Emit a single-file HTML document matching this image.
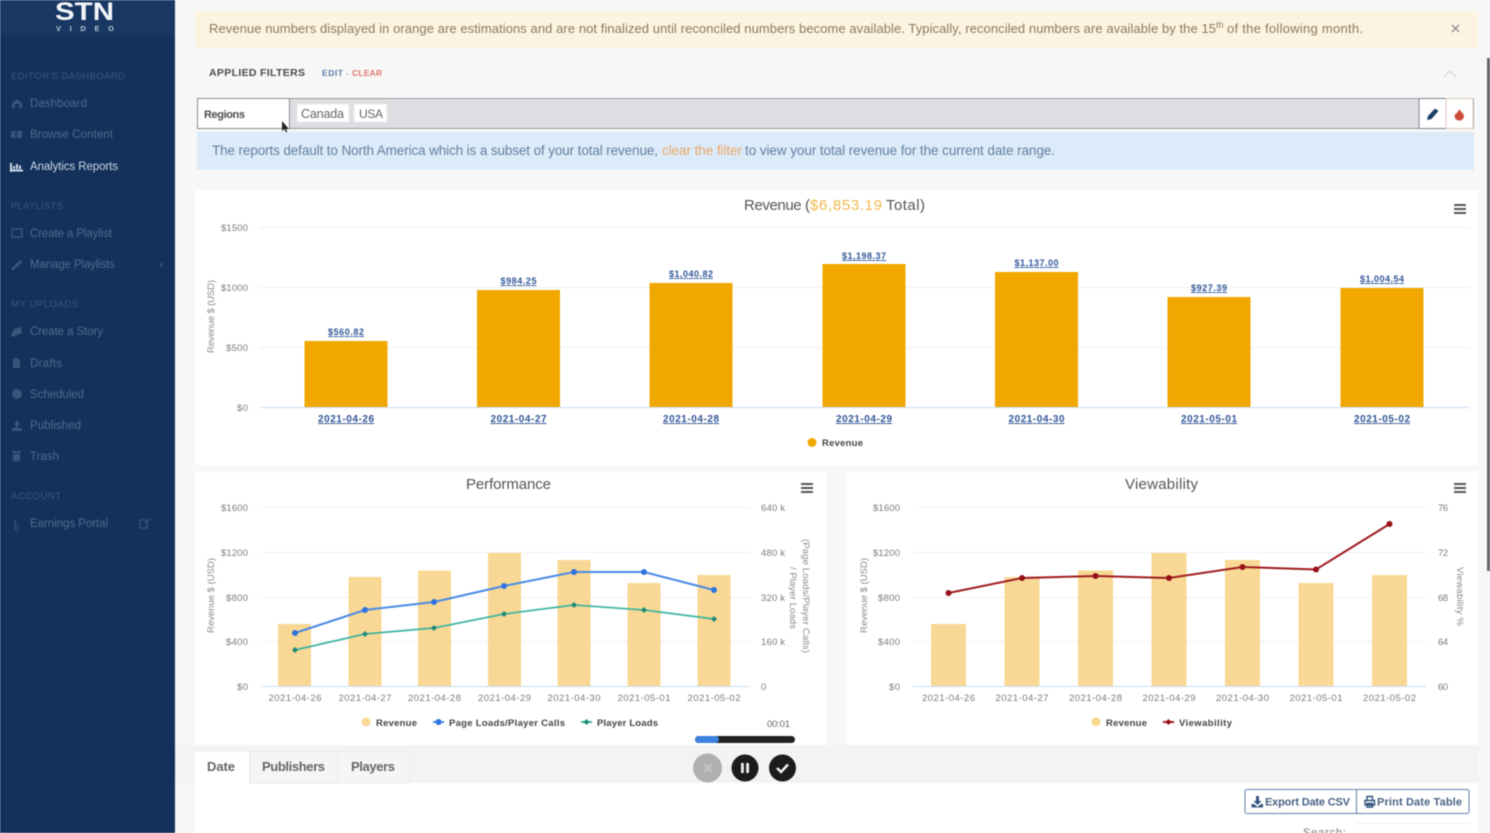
<!DOCTYPE html>
<html lang="en"><head><meta charset="utf-8"><title>Analytics Reports</title>
<style>
html,body{margin:0;padding:0;width:1490px;height:833px;overflow:hidden;background:#f7f7f7}
svg{display:block;filter:blur(.55px)}
text{font-family:"Liberation Sans",Arial,sans-serif}
.side{font-size:11.5px;fill:#4f6a8a}
.head{font-size:9.5px;fill:#3a577c}
.ax{font-size:9.5px;fill:#7b7b7b}
.axb{font-size:9.5px;fill:#888}
.blue{font-size:10px;font-weight:bold;fill:#2f5597;text-decoration:underline}
.val{font-size:9px}
.leg{font-size:9.5px;font-weight:bold;fill:#444}
.title{font-size:15px;fill:#555}
.alert{font-size:13px;fill:#8b7b5c}
.info{font-size:13.5px;fill:#62809f}
.tab{font-size:13px;font-weight:bold;fill:#666}
.btn{font-size:11px;font-weight:bold;fill:#4a6285}
.grid{stroke:#efefef;stroke-width:1}
.base{stroke:#c9def5;stroke-width:1}
</style></head><body>
<svg width="1490" height="833" viewBox="0 0 1490 833" xmlns="http://www.w3.org/2000/svg">
<rect width="1490" height="833" fill="#f7f7f7"/>

<!-- sidebar -->
<rect width="175" height="833" fill="#14315c"/>
<rect width="175" height="36" fill="#183763"/>
<text x="55" y="20" font-size="25" font-weight="bold" fill="#f2f5f8" textLength="59" lengthAdjust="spacingAndGlyphs">STN</text>
<text x="56" y="31" font-size="7.5" font-weight="bold" fill="#b9c6d6" textLength="58">VIDEO</text>
<text class="head" x="11" y="79" textLength="114">EDITOR'S DASHBOARD</text>
<text class="head" x="11" y="209" textLength="52">PLAYLISTS</text>
<text class="head" x="11" y="307" textLength="67">MY UPLOADS</text>
<text class="head" x="11" y="499" textLength="50">ACCOUNT</text>

<text class="side" x="30" y="107" textLength="57">Dashboard</text>
<text class="side" x="30" y="138" textLength="83">Browse Content</text>
<text class="side" x="30" y="170" textLength="88" style="fill:#cbd6e5">Analytics Reports</text>
<text class="side" x="30" y="237" textLength="82">Create a Playlist</text>
<text class="side" x="30" y="268" textLength="85">Manage Playlists</text>
<text class="side" x="30" y="335" textLength="73">Create a Story</text>
<text class="side" x="30" y="367" textLength="32">Drafts</text>
<text class="side" x="30" y="398" textLength="54">Scheduled</text>
<text class="side" x="30" y="429" textLength="51">Published</text>
<text class="side" x="30" y="460" textLength="29">Trash</text>
<text class="side" x="30" y="527" textLength="78">Earnings Portal</text>

<!-- sidebar icons -->
<g fill="#38557a">
<path d="M12 103 L17 99 L22 103 V108 H19 V104 H15 V108 H12Z"/>
<rect x="11" y="131" width="4.5" height="7"/><rect x="17" y="131" width="5" height="7"/>
<rect x="12" y="229" width="10" height="8" fill="none" stroke="#38557a" stroke-width="1.5"/>
<path d="M12 268 L20 260 L22 262 L14 270 L11 270Z"/>
<path d="M11 335 L14 329 L21 327 L22 333 L15 336 L13 337Z"/>
<path d="M13 358 H18 L20 361 V368 H13Z"/>
<circle cx="17" cy="394" r="5"/>
<path d="M17 420 L20 425 H18 V428 H22 V431 H12 V428 H16 V425 H14Z"/>
<path d="M13 454 H20 V461 H13Z"/><rect x="12" y="451" width="9" height="2"/>
<path d="M15 519 V530 H18 V526 L15 523Z" fill="none" stroke="#38557a"/>
<path d="M140 520 H147 V528 H140Z" fill="none" stroke="#38557a" stroke-width="1.2"/>
<path d="M145 523 L151 518" stroke="#38557a" stroke-width="1.2" fill="none"/>
</g>
<path d="M11 172 V163 M11 170.500 H23 M14 169 V166 M17 169 V164 M20 169 V165.500" stroke="#ced8e6" stroke-width="2" fill="none"/>
<path d="M163 263 L160 265 L163 267" stroke="#3c5a7f" fill="none"/>

<!-- alert -->
<rect x="195" y="11" width="1283" height="37" fill="#fcf3e1"/>
<text class="alert" x="209" y="33" textLength="1007">Revenue numbers displayed in orange are estimations and are not finalized until reconciled numbers become available. Typically, reconciled numbers are available by the 15</text>
<text x="1216" y="28" font-size="9" fill="#8b7b5c">th</text>
<text class="alert" x="1227" y="33" textLength="136">of the following month.</text>
<path d="M1452 25 L1459 32 M1459 25 L1452 32" stroke="#8e8e8e" stroke-width="1.3"/>

<!-- applied filters -->
<text x="209" y="76" font-size="10.5" font-weight="bold" fill="#4a4a4a" textLength="96">APPLIED FILTERS</text>
<text x="322" y="76" font-size="8.5" font-weight="bold" fill="#5a78ab" textLength="21">EDIT</text>
<text x="346" y="76" font-size="8.500" font-weight="bold" fill="#c9a09a">-</text>
<text x="352" y="76" font-size="8.500" font-weight="bold" fill="#e0776d" textLength="30">CLEAR</text>
<path d="M1444 77 L1450 71 L1456 77" stroke="#d8d8d8" stroke-width="1.3" fill="none"/>

<!-- filter bar -->
<rect x="197.500" y="98.500" width="1276" height="30" fill="#dddee1" stroke="#9a9a9e"/>
<rect x="197.500" y="98.500" width="92" height="30" fill="#fff" stroke="#8d8d8d"/>
<text x="204" y="118" font-size="11" font-weight="bold" fill="#4c4c4c" textLength="41">Regions</text>
<rect x="297" y="104" width="52" height="18" fill="#fff" stroke="#e8e8e8"/>
<rect x="354" y="104" width="33" height="18" fill="#fff" stroke="#e8e8e8"/>
<text x="301" y="118" font-size="12.5" fill="#666" textLength="43">Canada</text>
<text x="359" y="118" font-size="12" fill="#666" textLength="24">USA</text>
<rect x="1419" y="98.500" width="27" height="30" fill="#fff" stroke="#7d8592"/>
<rect x="1446" y="98.500" width="27" height="30" fill="#fff" stroke="#d8c7b7"/>
<path d="M1427 120 L1428 116 L1435 108.500 L1438.500 111 L1431.500 119Z" fill="#1d3c67"/>
<path d="M1459 109 C1460 111 1464 113 1464 116.500 A4.800 4.800 0 0 1 1454.500 116.500 C1454.500 114.500 1456 113.500 1457 113 C1457.500 112 1458.500 111 1459 109Z" fill="#cf4c3c"/>
<path d="M282 121 V131 L284.500 129 L286 133 L287.500 132.500 L286 129 L289 129Z" fill="#222"/>

<!-- info -->
<rect x="197" y="132" width="1277" height="38" fill="#dcebf9"/>
<text class="info" x="212" y="155" textLength="446">The reports default to North America which is a subset of your total revenue,</text>
<text class="info" x="662" y="155" textLength="80" style="fill:#e9a768">clear the filter</text>
<text class="info" x="745" y="155" textLength="310">to view your total revenue for the current date range.</text>

<!-- chart panels -->
<rect x="195" y="190" width="1283" height="275" fill="#fff"/>
<rect x="195" y="472" width="632" height="273" fill="#fff"/>
<rect x="847" y="472" width="631" height="273" fill="#fff"/>
<rect x="1487" y="58" width="3" height="513" fill="#666"/>

<!-- revenue chart -->
<text class="title" x="744" y="210" textLength="66">Revenue (</text>
<text class="title" x="810" y="210" textLength="72" style="fill:#f0b84c">$6,853.19</text>
<text class="title" x="886" y="210" textLength="39">Total)</text>
<g fill="#555"><rect x="1454" y="204" width="12" height="2"/><rect x="1454" y="208" width="12" height="2"/><rect x="1454" y="212" width="12" height="2"/></g>
<path class="grid" d="M260 227.500 H1470 M260 287.500 H1470 M260 347.500 H1470"/>
<path class="base" d="M260 407.500 H1470"/>
<text class="ax" x="248" y="231" text-anchor="end" textLength="27">$1500</text>
<text class="ax" x="248" y="291" text-anchor="end" textLength="27">$1000</text>
<text class="ax" x="248" y="351" text-anchor="end" textLength="22">$500</text>
<text class="ax" x="248" y="411" text-anchor="end" textLength="11">$0</text>
<text class="axb" transform="translate(214,353) rotate(-90)" textLength="73">Revenue $ (USD)</text>
<g fill="#f0a800">
<rect x="304.500" y="341" width="83" height="66"/>
<rect x="477" y="290" width="83" height="117"/>
<rect x="649.500" y="283" width="83" height="124"/>
<rect x="822.500" y="264" width="83" height="143"/>
<rect x="995" y="272" width="83" height="135"/>
<rect x="1167.500" y="297" width="83" height="110"/>
<rect x="1340.500" y="288" width="83" height="119"/>
</g>
<g text-anchor="middle">
<text class="blue val" x="346" y="335" textLength="36">$560.82</text>
<text class="blue val" x="518.500" y="284" textLength="36">$984.25</text>
<text class="blue val" x="691" y="277" textLength="44">$1,040.82</text>
<text class="blue val" x="864" y="259" textLength="44">$1,198.37</text>
<text class="blue val" x="1036.500" y="266" textLength="44">$1,137.00</text>
<text class="blue val" x="1209" y="291" textLength="36">$927.39</text>
<text class="blue val" x="1382" y="282" textLength="44">$1,004.54</text>
<text class="blue" x="346" y="422" textLength="56">2021-04-26</text>
<text class="blue" x="518.500" y="422" textLength="56">2021-04-27</text>
<text class="blue" x="691" y="422" textLength="56">2021-04-28</text>
<text class="blue" x="864" y="422" textLength="56">2021-04-29</text>
<text class="blue" x="1036.500" y="422" textLength="56">2021-04-30</text>
<text class="blue" x="1209" y="422" textLength="56">2021-05-01</text>
<text class="blue" x="1382" y="422" textLength="56">2021-05-02</text>
</g>
<circle cx="812" cy="442.500" r="4.500" fill="#f0a800"/>
<text class="leg" x="822" y="446" textLength="41">Revenue</text>

<!-- performance chart -->
<text class="title" x="466" y="489" textLength="85">Performance</text>
<g fill="#555"><rect x="801" y="483" width="12" height="2"/><rect x="801" y="487" width="12" height="2"/><rect x="801" y="491" width="12" height="2"/></g>
<path class="grid" d="M262 507.500 H750 M262 552.500 H750 M262 597.500 H750 M262 641.500 H750"/>
<path class="base" d="M261 686.500 H749"/>
<g class="ax" text-anchor="end">
<text x="248" y="511" textLength="27">$1600</text>
<text x="248" y="556" textLength="27">$1200</text>
<text x="248" y="601" textLength="22">$800</text>
<text x="248" y="645" textLength="22">$400</text>
<text x="248" y="690" textLength="11">$0</text>
</g>
<g class="ax">
<text x="761" y="511" textLength="24">640 k</text>
<text x="761" y="556" textLength="24">480 k</text>
<text x="761" y="601" textLength="24">320 k</text>
<text x="761" y="645" textLength="24">160 k</text>
<text x="761" y="690">0</text>
</g>
<text class="axb" transform="translate(214,633) rotate(-90)" textLength="75">Revenue $ (USD)</text>
<text class="axb" transform="translate(803,539) rotate(90)" textLength="114">(Page Loads/Player Calls)</text>
<text class="axb" transform="translate(790,567) rotate(90)" textLength="62">/ Player Loads</text>
<g fill="#f8d894">
<rect x="278" y="624" width="33" height="62"/>
<rect x="348.500" y="577" width="33" height="109"/>
<rect x="418" y="570.500" width="33" height="115.500"/>
<rect x="488" y="553" width="33" height="133"/>
<rect x="557.500" y="560" width="33" height="126"/>
<rect x="627.500" y="583" width="33" height="103"/>
<rect x="697.500" y="575" width="33" height="111"/>
</g>
<polyline points="295,633 365,610 434,602 504,586 574,572 644,572 714,590" fill="none" stroke="#4a8ae6" stroke-width="2"/>
<g fill="#2f73dd"><circle cx="295" cy="633" r="3"/><circle cx="365" cy="610" r="3"/><circle cx="434" cy="602" r="3"/><circle cx="504" cy="586" r="3"/><circle cx="574" cy="572" r="3"/><circle cx="644" cy="572" r="3"/><circle cx="714" cy="590" r="3"/></g>
<polyline points="295,650 365,634 434,628 504,614 574,605 644,610 714,619" fill="none" stroke="#3fb3a3" stroke-width="1.700"/>
<g fill="#1d8a76"><path d="M295 647 L298 650 L295 653 L292 650Z"/><path d="M365 631 L368 634 L365 637 L362 634Z"/><path d="M434 625 L437 628 L434 631 L431 628Z"/><path d="M504 611 L507 614 L504 617 L501 614Z"/><path d="M574 602 L577 605 L574 608 L571 605Z"/><path d="M644 607 L647 610 L644 613 L641 610Z"/><path d="M714 616 L717 619 L714 622 L711 619Z"/></g>
<g class="ax" text-anchor="middle">
<text x="295" y="701" textLength="53">2021-04-26</text>
<text x="365" y="701" textLength="53">2021-04-27</text>
<text x="434.500" y="701" textLength="53">2021-04-28</text>
<text x="504.500" y="701" textLength="53">2021-04-29</text>
<text x="574" y="701" textLength="53">2021-04-30</text>
<text x="644" y="701" textLength="53">2021-05-01</text>
<text x="714" y="701" textLength="53">2021-05-02</text>
</g>
<circle cx="366" cy="722" r="4.500" fill="#f8d894"/>
<text class="leg" x="376" y="726" textLength="41">Revenue</text>
<path d="M433 722 H444" stroke="#4a8ae6" stroke-width="2"/><circle cx="438.500" cy="722" r="3" fill="#2f73dd"/>
<text class="leg" x="449" y="726" textLength="116">Page Loads/Player Calls</text>
<path d="M581 722 H592" stroke="#3fb3a3" stroke-width="2"/><path d="M586.500 719 L589.500 722 L586.500 725 L583.500 722Z" fill="#1d8a76"/>
<text class="leg" x="597" y="726" textLength="61">Player Loads</text>

<!-- viewability chart -->
<text class="title" x="1125" y="489" textLength="73">Viewability</text>
<g fill="#555"><rect x="1454" y="483" width="12" height="2"/><rect x="1454" y="487" width="12" height="2"/><rect x="1454" y="491" width="12" height="2"/></g>
<path class="grid" d="M917 507.500 H1425 M914 552.500 H1425 M914 597.500 H1425 M914 641.500 H1425"/>
<path class="base" d="M913 686.500 H1426"/>
<g class="ax" text-anchor="end">
<text x="900" y="511" textLength="27">$1600</text>
<text x="900" y="556" textLength="27">$1200</text>
<text x="900" y="601" textLength="22">$800</text>
<text x="900" y="645" textLength="22">$400</text>
<text x="900" y="690" textLength="11">$0</text>
</g>
<g class="ax">
<text x="1438" y="511" textLength="10">76</text>
<text x="1438" y="556" textLength="10">72</text>
<text x="1438" y="601" textLength="10">68</text>
<text x="1438" y="645" textLength="10">64</text>
<text x="1438" y="690" textLength="10">60</text>
</g>
<text class="axb" transform="translate(867,633) rotate(-90)" textLength="75">Revenue $ (USD)</text>
<text class="axb" transform="translate(1457,567) rotate(90)" textLength="59">Viewability %</text>
<g fill="#f8d894">
<rect x="931" y="624" width="35" height="62"/>
<rect x="1004.500" y="577" width="35" height="109"/>
<rect x="1078" y="570.500" width="35" height="115.500"/>
<rect x="1151.500" y="553" width="35" height="133"/>
<rect x="1225" y="560" width="35" height="126"/>
<rect x="1298.500" y="583" width="35" height="103"/>
<rect x="1372" y="575" width="35" height="111"/>
</g>
<polyline points="948.500,593 1022,578 1095.500,576 1169,578 1242.500,567 1316,569.500 1389.500,524" fill="none" stroke="#a01c20" stroke-width="2"/>
<g fill="#97101a"><circle cx="948.500" cy="593" r="3"/><circle cx="1022" cy="578" r="3"/><circle cx="1095.500" cy="576" r="3"/><circle cx="1169" cy="578" r="3"/><circle cx="1242.500" cy="567" r="3"/><circle cx="1316" cy="569.500" r="3"/><circle cx="1389.500" cy="524" r="3"/></g>
<g class="ax" text-anchor="middle">
<text x="948.500" y="701" textLength="53">2021-04-26</text>
<text x="1022" y="701" textLength="53">2021-04-27</text>
<text x="1095.500" y="701" textLength="53">2021-04-28</text>
<text x="1169" y="701" textLength="53">2021-04-29</text>
<text x="1242.500" y="701" textLength="53">2021-04-30</text>
<text x="1316" y="701" textLength="53">2021-05-01</text>
<text x="1389.500" y="701" textLength="53">2021-05-02</text>
</g>
<circle cx="1096" cy="722" r="4.500" fill="#f8d894"/>
<text class="leg" x="1106" y="726" textLength="41">Revenue</text>
<path d="M1163 722 H1174" stroke="#a01c20" stroke-width="2"/><path d="M1168.500 719 L1171.500 722 L1168.500 725 L1165.500 722Z" fill="#97101a"/>
<text class="leg" x="1179" y="726" textLength="53">Viewability</text>

<!-- tabs -->
<rect x="175" y="745" width="1303" height="38" fill="#f3f3f3"/>
<rect x="195" y="783" width="1283" height="50" fill="#fff"/>
<rect x="195" y="752" width="54" height="32" fill="#fff"/>
<rect x="250" y="751" width="88" height="32" fill="#f5f5f5" stroke="#e8e8e8"/>
<rect x="338" y="751" width="72" height="32" fill="#f5f5f5" stroke="#ededed"/>
<text class="tab" x="207" y="771" textLength="28">Date</text>
<text class="tab" x="262" y="771" textLength="63">Publishers</text>
<text class="tab" x="351" y="771" textLength="44">Players</text>

<!-- recorder controls -->
<text x="767" y="727" font-size="9.5" fill="#666" textLength="23">00:01</text>
<rect x="695" y="736" width="100" height="7" rx="3.500" fill="#222"/>
<rect x="695" y="736" width="24" height="7" rx="3.500" fill="#3d82e0"/>
<circle cx="707.500" cy="768" r="14.500" fill="#b0b0b0"/>
<path d="M704 764.500 L711 771.500 M711 764.500 L704 771.500" stroke="#c4c4c4" stroke-width="2"/>
<circle cx="745" cy="768" r="13.500" fill="#1c1c1c"/>
<rect x="741" y="763" width="2.800" height="10" fill="#eee"/><rect x="746.200" y="763" width="2.800" height="10" fill="#eee"/>
<circle cx="782.500" cy="768" r="13.500" fill="#1c1c1c"/>
<path d="M777 768 L781 772 L788 764.500" stroke="#f2f2f2" stroke-width="2.500" fill="none"/>

<!-- export buttons -->
<rect x="1245" y="789.500" width="224" height="24" rx="2" fill="#fff" stroke="#5f80ad"/>
<path d="M1356.500 789.500 V813.500" stroke="#5f80ad"/>
<path d="M1256 796 H1259 V801 H1261.500 L1257.500 805 L1253.500 801 H1256Z M1251.500 804 H1254 L1257.500 807 L1261 804 H1263 V807.500 H1251.500Z" fill="#33537f"/>
<text class="btn" x="1265" y="805.500" textLength="85">Export Date CSV</text>
<path d="M1367 800 V796.500 H1372.500 V800 M1365 800.500 H1374.500 V805 H1365Z M1367 803.500 H1372.500 V807 H1367Z" fill="none" stroke="#33537f" stroke-width="1.400"/>
<text class="btn" x="1377" y="805.500" textLength="85">Print Date Table</text>
<path d="M1356 823.500 H1470" stroke="#eeeeee"/>
<text x="1303" y="836" font-size="11" fill="#777" textLength="43">Search:</text>
</svg>
</body></html>
